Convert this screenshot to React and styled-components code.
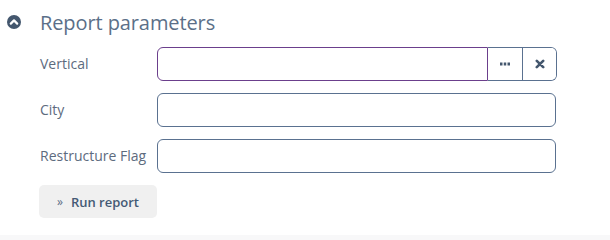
import React from "react";
import styled, { createGlobalStyle } from "styled-components";

const Global = createGlobalStyle`
  body {
    margin: 0;
    background: #fff;
    font-family: "Open Sans", "Noto Sans", sans-serif;
  }
`;

const Page = styled.div`
  width: 610px;
  height: 240px;
  display: flex;
  flex-direction: column;
  overflow: hidden;
`;

const Panel = styled.div`
  flex: 1;
  padding: 8px 0 0 7px;
`;

const Header = styled.div`
  display: flex;
  align-items: center;
  height: 28px;
  gap: 19px;
`;

const Title = styled.h2`
  margin: 0;
  font-size: 20px;
  font-weight: 400;
  color: #5b6f88;
  letter-spacing: -0.1px;
`;

const Form = styled.div`
  display: flex;
  flex-direction: column;
  gap: 12px;
  margin-top: 11px;
  padding-left: 33px;
`;

const Row = styled.div`
  display: flex;
  align-items: center;
  height: 34px;
`;

const Label = styled.label`
  width: 117px;
  font-size: 14px;
  color: #5d6b7e;
  margin-top: -1px;
`;

const Field = styled.div`
  display: flex;
  width: 399px;
  height: 34px;
  box-sizing: border-box;
  border: 1px solid #5a7190;
  border-radius: 6px;
  overflow: hidden;
`;

const Input = styled.input`
  flex: 1;
  min-width: 0;
  border: none;
  outline: none;
  background: transparent;
  font: inherit;
`;

const Combo = styled.div`
  display: flex;
`;

const MainInput = styled(Field)`
  width: 331px;
  border-color: #6b3f8c;
  border-radius: 6px 0 0 6px;
`;

const Lookup = styled.div`
  display: flex;
  height: 34px;
  box-sizing: border-box;
  border: 1px solid #5a7190;
  border-left: none;
  border-radius: 0 6px 6px 0;
  overflow: hidden;
`;

const Addon = styled.button`
  width: 34px;
  border: none;
  border-left: ${(p) => (p.divider ? "1px solid #5a7190" : "none")};
  background: #fff;
  display: flex;
  align-items: center;
  justify-content: center;
  padding: 0;
`;

const RunButton = styled.button`
  align-self: flex-start;
  margin-left: -1px;
  width: 118px;
  height: 33px;
  border: none;
  border-radius: 5px;
  background: #f0f0f0;
  font-family: "Open Sans", sans-serif;
  font-size: 13px;
  font-weight: 600;
  color: #445a75;
  display: flex;
  align-items: center;
  justify-content: center;
  gap: 8px;
  padding: 0;
`;

const Chevrons = styled.span`
  font-weight: 400;
  font-size: 12px;
  color: #5a6d85;
`;

const Footer = styled.div`
  height: 5px;
  background: #f8f8f9;
`;

export default function App() {
  return (
    <Page>
      <Global />
      <Panel>
        <Header>
          <svg width="14" height="14" viewBox="0 0 14 14">
            <circle cx="7" cy="7" r="7" fill="#44576e" />
            <path d="M3.8 8.6 L7 5.4 L10.2 8.6" stroke="#fff" strokeWidth="2.2" fill="none" strokeLinecap="round" strokeLinejoin="round" />
          </svg>
          <Title>Report parameters</Title>
        </Header>
        <Form>
          <Row>
            <Label>Vertical</Label>
            <Combo>
              <MainInput>
                <Input />
              </MainInput>
              <Lookup>
                <Addon>
                  <svg width="12" height="4" viewBox="0 0 12 4">
                    <rect x="1" y="0.5" width="2.5" height="3" fill="#44576e" />
                    <rect x="4.75" y="0.5" width="2.5" height="3" fill="#44576e" />
                    <rect x="8.5" y="0.5" width="2.5" height="3" fill="#44576e" />
                  </svg>
                </Addon>
                <Addon divider>
                  <svg width="10" height="10" viewBox="0 0 10 10">
                    <path d="M1.8 1.8 L8.2 8.2 M8.2 1.8 L1.8 8.2" stroke="#44576e" strokeWidth="2.6" strokeLinecap="round" />
                  </svg>
                </Addon>
              </Lookup>
            </Combo>
          </Row>
          <Row>
            <Label>City</Label>
            <Field>
              <Input />
            </Field>
          </Row>
          <Row>
            <Label>Restructure Flag</Label>
            <Field>
              <Input />
            </Field>
          </Row>
          <RunButton>
            <Chevrons>»</Chevrons>
            Run report
          </RunButton>
        </Form>
      </Panel>
      <Footer />
    </Page>
  );
}
